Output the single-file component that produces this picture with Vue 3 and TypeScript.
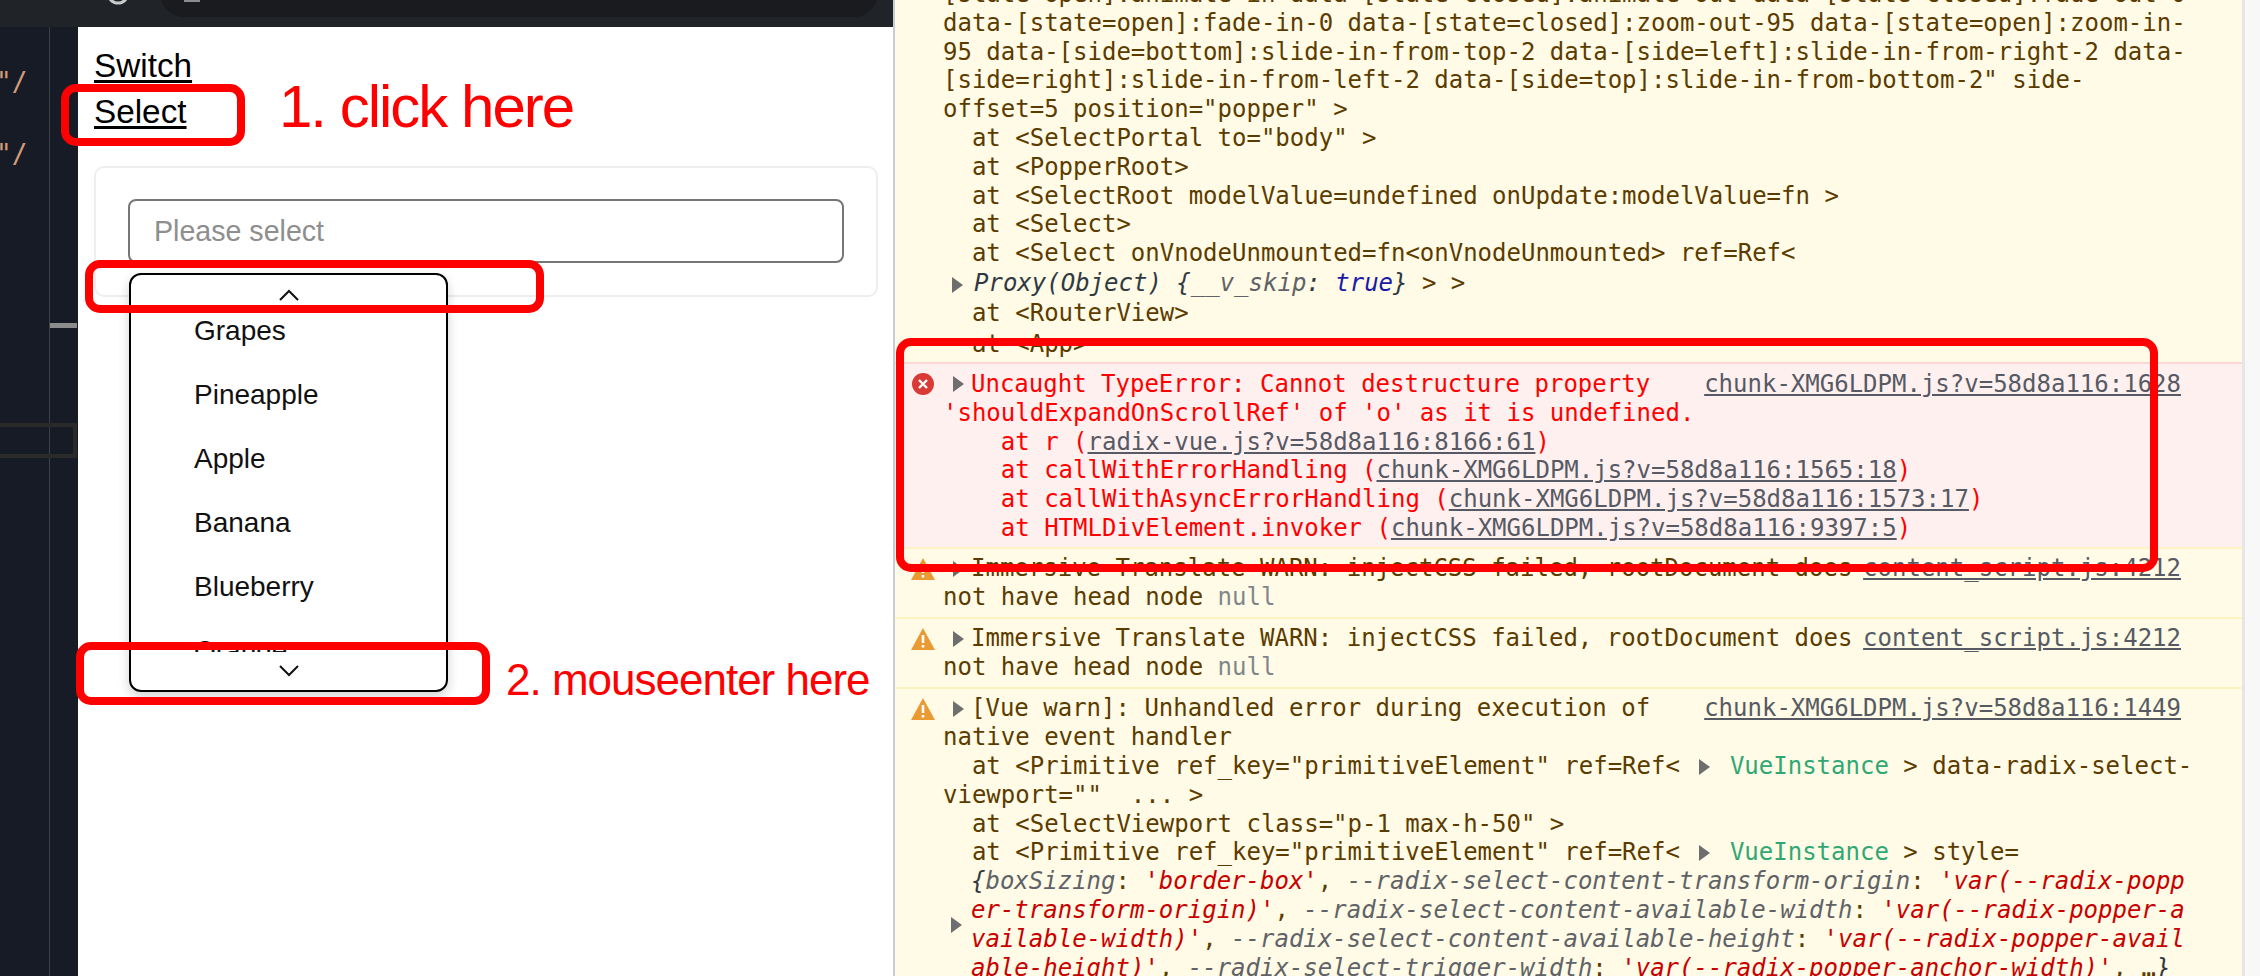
<script setup lang="ts">
const fruits: string[] = ['Grapes', 'Pineapple', 'Apple', 'Banana', 'Blueberry', 'Orange']
const topLines: string[] = [
  '[state=open]:animate-in data-[state=closed]:animate-out data-[state=closed]:fade-out-0',
  'data-[state=open]:fade-in-0 data-[state=closed]:zoom-out-95 data-[state=open]:zoom-in-',
  '95 data-[side=bottom]:slide-in-from-top-2 data-[side=left]:slide-in-from-right-2 data-',
  '[side=right]:slide-in-from-left-2 data-[side=top]:slide-in-from-bottom-2" side-',
  'offset=5 position="popper" >',
  '  at <SelectPortal to="body" >',
  '  at <PopperRoot>',
  '  at <SelectRoot modelValue=undefined onUpdate:modelValue=fn >',
  '  at <Select>',
  '  at <Select onVnodeUnmounted=fn<onVnodeUnmounted> ref=Ref<'
]
const source = 'chunk-XMG6LDPM.js?v=58d8a116'
const stack: { name: string; link: string }[] = [
  { name: 'r', link: 'radix-vue.js?v=58d8a116:8166:61' },
  { name: 'callWithErrorHandling', link: source + ':1565:18' },
  { name: 'callWithAsyncErrorHandling', link: source + ':1573:17' },
  { name: 'HTMLDivElement.invoker', link: source + ':9397:5' }
]
</script>

<template>
  <div class="screen">
    <header class="browser-bar">
      <svg class="reload" width="24" height="6" viewBox="0 0 24 6"><path d="M2 0a10 10 0 0 0 20 0" transform="translate(0 -7)" fill="none" stroke="#c8cacc" stroke-width="3" /></svg>
      <div class="address"><i class="address-mark"></i></div>
    </header>
    <div class="workspace">
      <aside class="editor">
        <div class="code-line first">"/</div>
        <div class="code-line">"/</div>
        <div class="gutter"></div>
        <div class="scroll-mark"></div>
        <div class="line-box"></div>
      </aside>

      <main class="page">
        <a class="nav-link">Switch</a>
        <a class="nav-link">Select</a>
        <section class="card">
          <div class="field">Please select</div>
        </section>

        <div class="dropdown">
          <div class="scroll-button up">
            <svg width="20" height="12" viewBox="0 0 20 12"><path d="M1 11 10 2l9 9" fill="none" stroke="#111" stroke-width="2" /></svg>
          </div>
          <div class="viewport">
            <div v-for="fruit in fruits" :key="fruit" class="option">{{ fruit }}</div>
          </div>
          <div class="scroll-button down">
            <svg width="20" height="12" viewBox="0 0 20 12"><path d="m1 1 9 9 9-9" fill="none" stroke="#111" stroke-width="2" /></svg>
          </div>
        </div>

        <div class="mark mark-select"></div>
        <div class="mark mark-up"></div>
        <div class="mark mark-down"></div>
        <div class="note note-one">1. click here</div>
        <div class="note note-two">2. mouseenter here</div>
      </main>

      <section class="console">
        <div class="row plain">
          <div v-for="(line, i) in topLines" :key="i" class="line">{{ line }}</div>
          <div class="line proxy"><svg class="tri lead" width="11" height="16" viewBox="0 0 11 16"><path d="M0 0l11 8-11 8z" /></svg><span class="obj">Proxy(Object) {<span class="key">__v_skip</span>: <span class="bool">true</span>}</span> &gt; &gt;</div>
          <div class="line in router">at &lt;RouterView&gt;</div>
          <div class="line in app">at &lt;App&gt;</div>
        </div>

        <div class="row error">
          <div class="line head">
            <svg class="status" width="24" height="24" viewBox="0 0 24 24"><circle cx="12" cy="12" r="11" fill="#d93a35" /><path d="m8 8 8 8m0-8-8 8" stroke="#fff" stroke-width="2.4" /></svg>
            <svg class="tri" width="11" height="16" viewBox="0 0 11 16"><path d="M0 0l11 8-11 8z" /></svg>
            <span>Uncaught TypeError: Cannot destructure property</span>
            <a class="source">chunk-XMG6LDPM.js?v=58d8a116:1628</a>
          </div>
          <div class="line">'shouldExpandOnScrollRef' of 'o' as it is undefined.</div>
          <div v-for="frame in stack" :key="frame.link" class="line in2">at {{ frame.name }} (<a class="ref">{{ frame.link }}</a>)</div>
        </div>

        <div class="row warn">
          <div class="line head">
            <svg class="status" width="24" height="22" viewBox="0 0 24 22"><path d="M12 0l12 22H0z" fill="#ea9a33" /><path d="M12 7v8m0 2v2.600" stroke="#fff" stroke-width="2.600" /></svg>
            <svg class="tri" width="11" height="16" viewBox="0 0 11 16"><path d="M0 0l11 8-11 8z" /></svg>
            <span>Immersive Translate WARN: injectCSS failed, rootDocument does</span>
            <a class="source">content_script.js:4212</a>
          </div>
          <div class="line">not have head node <span class="null">null</span></div>
        </div>

        <div class="row warn">
          <div class="line head">
            <svg class="status" width="24" height="22" viewBox="0 0 24 22"><path d="M12 0l12 22H0z" fill="#ea9a33" /><path d="M12 7v8m0 2v2.600" stroke="#fff" stroke-width="2.600" /></svg>
            <svg class="tri" width="11" height="16" viewBox="0 0 11 16"><path d="M0 0l11 8-11 8z" /></svg>
            <span>Immersive Translate WARN: injectCSS failed, rootDocument does</span>
            <a class="source">content_script.js:4212</a>
          </div>
          <div class="line">not have head node <span class="null">null</span></div>
        </div>

        <div class="row warn">
          <div class="line head">
            <svg class="status" width="24" height="22" viewBox="0 0 24 22"><path d="M12 0l12 22H0z" fill="#ea9a33" /><path d="M12 7v8m0 2v2.600" stroke="#fff" stroke-width="2.600" /></svg>
            <svg class="tri" width="11" height="16" viewBox="0 0 11 16"><path d="M0 0l11 8-11 8z" /></svg>
            <span>[Vue warn]: Unhandled error during execution of</span>
            <a class="source">chunk-XMG6LDPM.js?v=58d8a116:1449</a>
          </div>
          <div class="line">native event handler</div>
          <div class="line in">at &lt;Primitive ref_key="primitiveElement" ref=Ref&lt;<span class="gap"><svg class="tri" width="11" height="16" viewBox="0 0 11 16"><path d="M0 0l11 8-11 8z" /></svg></span><span class="vue">VueInstance</span> &gt; data-radix-select-</div>
          <div class="line">viewport=""&nbsp;&nbsp;... &gt;</div>
          <div class="line in">at &lt;SelectViewport class="p-1 max-h-50" &gt;</div>
          <div class="line in">at &lt;Primitive ref_key="primitiveElement" ref=Ref&lt;<span class="gap"><svg class="tri" width="11" height="16" viewBox="0 0 11 16"><path d="M0 0l11 8-11 8z" /></svg></span><span class="vue">VueInstance</span> &gt; style=</div>
          <div class="object">
            <svg class="tri" width="11" height="16" viewBox="0 0 11 16"><path d="M0 0l11 8-11 8z" /></svg>
            <div class="object-lines">
              <div class="line"><span class="brace">{</span><span class="key">boxSizing</span>: <span class="str">'border-box'</span>, <span class="key">--radix-select-content-transform-origin</span>: <span class="str">'var(--radix-popp</span></div>
              <div class="line"><span class="str">er-transform-origin)'</span>, <span class="key">--radix-select-content-available-width</span>: <span class="str">'var(--radix-popper-a</span></div>
              <div class="line"><span class="str">vailable-width)'</span>, <span class="key">--radix-select-content-available-height</span>: <span class="str">'var(--radix-popper-avail</span></div>
              <div class="line"><span class="str">able-height)'</span>, <span class="key">--radix-select-trigger-width</span>: <span class="str">'var(--radix-popper-anchor-width)'</span>, …<span class="brace">}</span></div>
            </div>
          </div>
        </div>

        <div class="mark mark-error"></div>
      </section>
      <div class="edge"></div>
    </div>
  </div>
</template>

<style>
html, body { margin: 0; overflow: hidden; background: #fff; }
</style>

<style scoped>
.screen { width: 2260px; height: 976px; display: flex; flex-direction: column; overflow: hidden; font-family: "Liberation Sans", Arial, sans-serif; }

.browser-bar { height: 27px; flex: none; background: #202327; position: relative; overflow: hidden; }
.reload { position: absolute; left: 106px; top: 0; }
.address { position: absolute; left: 160px; top: -30px; width: 718px; height: 47px; border-radius: 0 0 24px 24px; background: #1a1b1f; }
.address-mark { position: absolute; left: 24px; top: 30px; width: 16px; height: 2px; background: #8b8d90; }

.workspace { flex: 1; display: flex; min-height: 0; }

.editor { width: 78px; flex: none; background: #161b26; position: relative; overflow: hidden; font: 26px/30px "DejaVu Sans Mono", monospace; color: #d49a7c; }
.code-line { height: 72px; margin-left: -4px; white-space: pre; }
.code-line.first { margin-top: 40px; }
.gutter { position: absolute; left: 49px; top: 0; bottom: 0; width: 1px; background: #3c4048; }
.scroll-mark { position: absolute; left: 50px; top: 296px; width: 27px; height: 5px; background: #8c8c8c; }
.line-box { position: absolute; left: -6px; top: 396px; width: 83px; height: 35px; box-sizing: border-box; border: 4px solid #2a2a2a; }

.page { width: 815px; flex: none; box-sizing: border-box; padding: 16px 15px 0 16px; background: #fff; position: relative; }
.nav-link { display: block; width: fit-content; font-size: 33.300px; line-height: 45.500px; color: #000; text-decoration: underline; text-decoration-thickness: 3px; text-underline-offset: 3px; }
.card { margin-top: 32px; box-sizing: border-box; height: 131px; padding: 33px 34px; border: 2px solid #eee; border-radius: 10px; }
.field { margin: -2px; height: 64px; box-sizing: border-box; padding-left: 24px; border: 2px solid #767676; border-radius: 8px; font-size: 28.600px; line-height: 60px; color: #8e8e8e; }

.dropdown { position: absolute; left: 51px; top: 246px; width: 319px; height: 419px; box-sizing: border-box; display: flex; flex-direction: column; background: #fff; border: 2px solid #000; border-radius: 12px; box-shadow: 0 5px 12px rgba(0, 0, 0, 0.18); }
.scroll-button { flex: none; display: flex; justify-content: center; }
.scroll-button.up { height: 30px; padding-top: 14px; box-sizing: border-box; }
.scroll-button.down { height: 38px; padding-top: 13px; box-sizing: border-box; }
.viewport { flex: 1; min-height: 0; overflow: hidden; }
.option { height: 64px; padding-left: 63px; font-size: 28px; line-height: 64px; color: #111; position: relative; top: -6px; }

.mark { position: absolute; box-sizing: border-box; border: 8px solid #f00; border-radius: 15px; pointer-events: none; }
.mark-select { left: -17px; top: 57px; width: 184px; height: 62px; }
.mark-up { left: 7px; top: 233px; width: 459px; height: 53px; }
.mark-down { left: -2px; top: 615px; width: 414px; height: 63px; }
.mark-error { left: 1px; top: 338px; width: 1262px; height: 234px; }

.note { position: absolute; color: #f00; white-space: nowrap; line-height: 1; }
.note-one { left: 201px; top: 50px; font-size: 60px; letter-spacing: -2px; }
.note-two { left: 428px; top: 631px; font-size: 44px; letter-spacing: -1px; }

.console { width: 1349px; flex: none; box-sizing: border-box; border-left: 2px solid #c8ccd4; background: #fffbe6; position: relative; overflow: hidden; font: 24px/28.800px "DejaVu Sans Mono", monospace; color: #5c3b00; margin-top: -27px; z-index: 1; }
.row { box-sizing: border-box; padding: 6px 61px 5px 48px; }
.plain { padding-top: 0; margin-top: -20px; padding-bottom: 3.600px; }
.line { white-space: pre; height: 28.800px; }
.in { padding-left: 28.900px; }
.in2 { padding-left: 57.800px; }
.proxy { margin-top: 1px; }
.router { margin-top: 1px; }
.app { margin-top: 2px; }
.head { display: flex; align-items: center; margin-left: -32px; }
.status { flex: none; margin-right: 18px; }
.tri { flex: none; fill: #6e6e6e; margin-right: 7px; }
.lead { position: relative; top: 2px; margin-left: 9px; margin-right: 11px; }
.source, .ref { color: #565a64; text-decoration: underline; }
.source { margin-left: auto; }
.error { background: #fff0f0; color: #f00; border-top: 2px solid #ffd6d6; padding-bottom: 4.200px; }
.warn { background: #fffbe6; border-top: 2px solid #fff3c4; padding-top: 5.500px; padding-bottom: 4.900px; }
.null { color: #80868b; }
.vue { color: #2fa873; }
.gap { display: inline-flex; width: 50px; justify-content: center; vertical-align: -1px; }
.gap .tri { margin-right: 0; }
.obj { font-style: italic; color: #303942; }
.key { color: #5f6368; font-style: italic; }
.bool { color: #1a1aa6; font-style: italic; }
.str { color: #c80000; font-style: italic; }
.brace { color: #303942; font-style: italic; }
.object { display: flex; align-items: center; margin-left: 8px; }
.object .tri { margin-right: 9px; }
.edge { flex: 1; margin-top: -27px; border-left: 3px solid #e6e6e6; background: #f8f8f8; z-index: 1; }
</style>
